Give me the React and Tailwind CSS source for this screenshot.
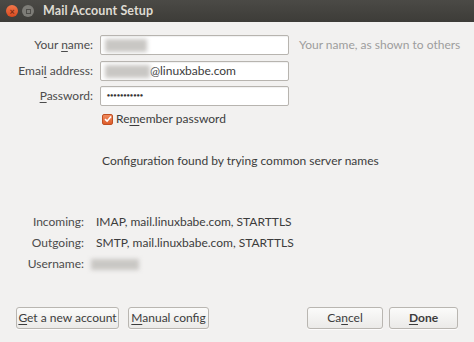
import React from "react";

const font = { fontFamily: 'Lato, "Liberation Sans", sans-serif' };

function Label({ children, w = "w-[100px]", pr = "pr-[7px]" }) {
    return <div className={`${w} ${pr} shrink-0 text-right text-[#4c4c4c]`}>{children}</div>;
}

function Blur({ className }) {
    return <div className={`bg-[#c9c7c4] blur-[2px] ${className}`}></div>;
}

function Btn({ children, className = "" }) {
    return (
        <button className={`h-[22px] whitespace-nowrap rounded-[3px] border border-[#b9b6b1] bg-gradient-to-b from-[#fbfbfa] to-[#ebeae8] text-[#3c3c3c] text-[12px] leading-none shadow-[0_1px_0_rgba(255,255,255,0.8)] ${className}`}>
            {children}
        </button>
    );
}

export default function App() {
    const inputClass = "w-[189px] h-[20px] rounded-[2px] border border-[#b7b4af] bg-white flex items-center px-[3px] shadow-[inset_0_1px_1px_rgba(0,0,0,0.06)]";

    return (
        <div className="w-[474px] h-[342px] bg-[#f2f1f0] flex flex-col text-[12px] text-[#3c3c3c] overflow-hidden" style={font}>
            {/* title bar */}
            <div className="h-[22px] shrink-0 bg-gradient-to-b from-[#4b4a46] to-[#3d3c38] flex items-center pl-[6px]">
                <div className="w-[12px] h-[12px] rounded-full bg-gradient-to-b from-[#f2774a] to-[#d8491e] flex items-center justify-center text-[#7a2a10] text-[9px] font-bold leading-none">×</div>
                <div className="w-[12px] h-[12px] rounded-full bg-[#7d7c77] ml-[4px] flex items-center justify-center">
                    <div className="w-[5px] h-[5px] border border-[#4e4d49]"></div>
                </div>
                <div className="ml-[9px] text-[#dfdbd2] font-bold text-[12.5px] tracking-[0.1px]">Mail Account Setup</div>
            </div>

            {/* form */}
            <div className="flex flex-col pt-[13px]">
                <div className="flex items-center h-[20px]">
                    <Label>Your <u className="underline-offset-2">n</u>ame:</Label>
                    <div className={inputClass}>
                        <Blur className="w-[42px] h-[13px] ml-[1px]" />
                    </div>
                    <div className="ml-[10px] text-[#9d9d9d]">Your name, as shown to others</div>
                </div>
                <div className="flex items-center h-[20px] mt-[6px]">
                    <Label>Emai<u className="underline-offset-2">l</u> address:</Label>
                    <div className={inputClass}>
                        <Blur className="w-[45px] h-[13px] ml-[1px]" />
                        <span className="text-[#3c3c3c]">@linuxbabe.com</span>
                    </div>
                </div>
                <div className="flex items-center h-[20px] mt-[5px]">
                    <Label><u className="underline-offset-2">P</u>assword:</Label>
                    <div className={inputClass}>
                        <span className="text-[5px] tracking-[0.3px] pl-[3px] text-[#333]">●●●●●●●●●●●</span>
                    </div>
                </div>
                <div className="flex items-center mt-[4px] pl-[102px] h-[18px]">
                    <div className="w-[11px] h-[11px] rounded-[2px] bg-gradient-to-b from-[#f08a5d] to-[#dd5c2a] border border-[#c04f22] flex items-center justify-center">
                        <svg width="8" height="8" viewBox="0 0 8 8"><path d="M1 4.2 L3.1 6.2 L7 1.6" fill="none" stroke="#fff" strokeWidth="1.6" /></svg>
                    </div>
                    <div className="ml-[3px]">Re<u className="underline-offset-2">m</u>ember password</div>
                </div>
                <div className="mt-[24px] pl-[102px]">Configuration found by trying common server names</div>

                <div className="flex flex-col mt-[43px] gap-[3px]">
                    <div className="flex items-center h-[18px]">
                        <Label w="w-[96px]" pr="pr-[12px]">Incoming:</Label>
                        <div>IMAP, mail.linuxbabe.com, STARTTLS</div>
                    </div>
                    <div className="flex items-center h-[18px]">
                        <Label w="w-[96px]" pr="pr-[12px]">Outgoing:</Label>
                        <div>SMTP, mail.linuxbabe.com, STARTTLS</div>
                    </div>
                    <div className="flex items-center h-[18px]">
                        <Label w="w-[96px]" pr="pr-[12px]">Username:</Label>
                        <Blur className="w-[48px] h-[11px] -ml-[5px]" />
                    </div>
                </div>
            </div>

            {/* buttons */}
            <div className="mt-auto mb-[13px] flex items-center px-[16px]">
                <Btn className="w-[103px]"><u className="underline-offset-2">G</u>et a new account</Btn>
                <Btn className="w-[81px] ml-[9px]"><u className="underline-offset-2">M</u>anual config</Btn>
                <Btn className="w-[76px] ml-auto">Ca<u className="underline-offset-2">n</u>cel</Btn>
                <Btn className="w-[69px] ml-[6px] font-bold"><u className="underline-offset-2">D</u>one</Btn>
            </div>
        </div>
    );
}
